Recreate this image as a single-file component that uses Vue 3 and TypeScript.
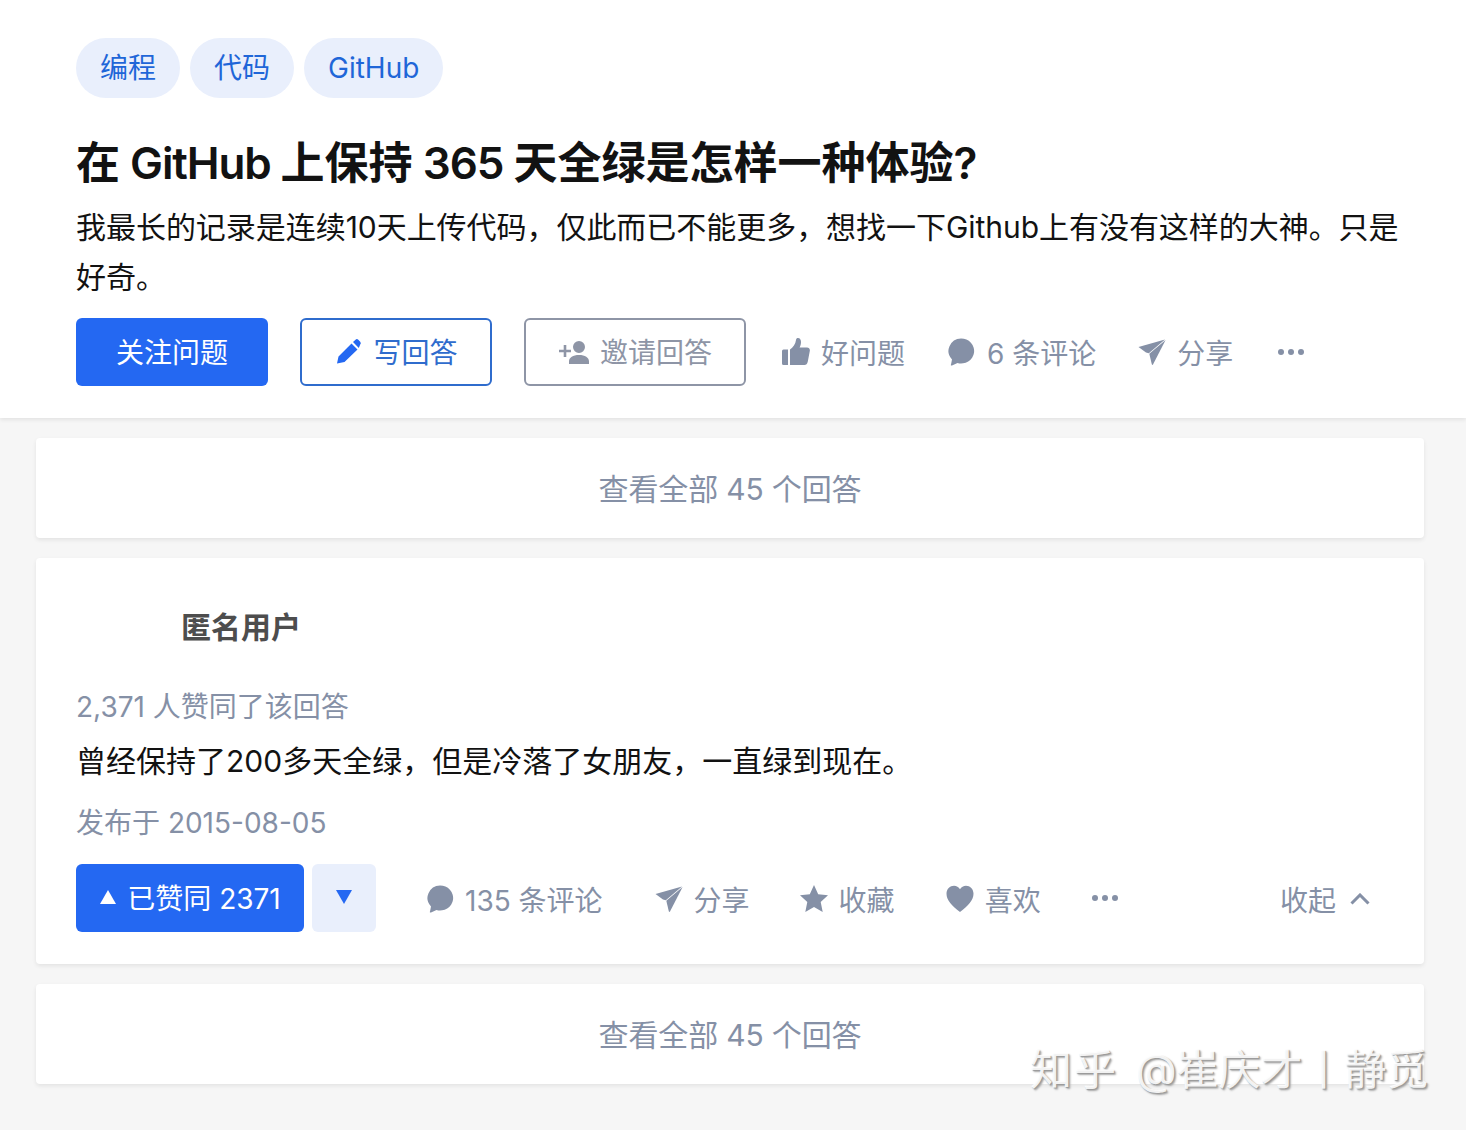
<template>
  <div class="page">
    <header class="question">
      <div class="tags">
        <span v-for="t in tags" :key="t" class="tag">{{ t }}</span>
      </div>
      <h1 class="title">在 <span class="tight-a">GitHub</span> 上保持 <span class="tight-b">365</span> 天全绿是怎样一种体验?</h1>
      <p class="desc">我最长的记录是连续10天上传代码，仅此而已不能更多，想找一下Github上有没有这样的大神。只是好奇。</p>
      <div class="actions">
        <button class="btn primary follow">关注问题</button>
        <button class="btn outline-blue">
          <svg class="pen" viewBox="0 0 28 28"><path d="M3 26.500L4.500 19.500L17.500 6.500L23.500 12.500L10.500 25zM19 5L21.500 2.800a2 2 0 0 1 2.800 0L26.200 4.700a2 2 0 0 1 0 2.800L24.800 11z" fill="currentColor" /></svg>
          写回答
        </button>
        <button class="btn outline-gray">
          <svg class="invite" viewBox="0 0 32 26"><path d="M21 3a6 6 0 1 1 0 12a6 6 0 0 1 0-12zM11 26v-2.500c0-4 4-6.500 10-6.500s10 2.500 10 6.500V26z M1 11.700h4.700V7h2.600v4.700H13v2.600H8.300V19H5.700v-4.700H1z" fill="currentColor" /></svg>
          邀请回答
        </button>
        <div class="links first">
          <span class="link l1">
            <svg class="ic thumb" viewBox="0 0 28 28"><path d="M0 13a1.500 1.500 0 0 1 1.500-1.500H6V27H1.500A1.500 1.500 0 0 1 0 25.500zM8 11.500c3-2 5.500-5.500 6-9.500c.2-1.500 1-2 2-2c2 0 3 2 3 4c0 2-.6 4-1.400 5.500h7.400c2 0 3.200 1.500 2.800 3.500l-2 10.500C25.400 26 24 27 22.500 27H8z" fill="currentColor" /></svg>
            好问题
          </span>
          <span class="link l2">
            <svg class="ic" viewBox="0 0 28 28"><use href="#bubble" /></svg>
            6 条评论
          </span>
          <span class="link l3">
            <svg class="ic" viewBox="0 0 28 28"><use href="#plane" /></svg>
            分享
          </span>
          <span class="dots d1"><i /><i /><i /></span>
        </div>
      </div>
    </header>

    <section class="card more">查看全部 45 个回答</section>

    <section class="card answer">
      <div class="author">匿名用户</div>
      <div class="meta">2,371 人赞同了该回答</div>
      <p class="content">曾经保持了200多天全绿，但是冷落了女朋友，一直绿到现在。</p>
      <div class="meta date">发布于 2015-08-05</div>
      <div class="answer-bar">
        <button class="btn primary vote">
          <svg class="tri up" viewBox="0 0 16 14"><path d="M8 0l8 14H0z" fill="currentColor" /></svg>
          已赞同 2371
        </button>
        <button class="btn down">
          <svg class="tri" viewBox="0 0 16 14"><path d="M0 0h16L8 14z" fill="currentColor" /></svg>
        </button>
        <span class="link a1">
          <svg class="ic" viewBox="0 0 28 28"><use href="#bubble" /></svg>
          135 条评论
        </span>
        <span class="link a2">
          <svg class="ic" viewBox="0 0 28 28"><use href="#plane" /></svg>
          分享
        </span>
        <span class="link a3">
          <svg class="ic" viewBox="0 0 28 28"><path d="M14 0l4.200 9.200 9.800 1.100-7.300 6.700 2 9.900L14 22l-8.700 4.900 2-9.900L0 10.300l9.800-1.100z" fill="currentColor" /></svg>
          收藏
        </span>
        <span class="link a4">
          <svg class="ic" viewBox="0 0 28 28"><path d="M14 27C6 21 .5 15.500.5 8.800C.5 4 4 .8 8 .8c2.500 0 4.700 1.200 6 3.400C15.300 2 17.500.8 20 .8c4 0 7.500 3.200 7.500 8C27.500 15.500 22 21 14 27z" fill="currentColor" /></svg>
          喜欢
        </span>
        <span class="dots a5"><i /><i /><i /></span>
        <span class="link fold">
          收起
          <svg class="chev" viewBox="0 0 20 12"><path d="M1.500 10.500L10 2l8.500 8.500" fill="none" stroke="currentColor" stroke-width="3" /></svg>
        </span>
      </div>
    </section>

    <section class="card more">查看全部 45 个回答</section>

    <div class="mark"><span class="mark-brand">知乎</span>@崔庆才丨静觅</div>

    <svg class="defs" width="0" height="0">
      <defs>
        <path id="bubble" d="M13 0.500a13 12.500 0 1 1-3.500 24.500L4 27.500c-1 .4-1.500-.3-1-1L4 21.500A13 12.500 0 0 1 13 .5z" fill="currentColor" />
        <g id="plane" fill="currentColor">
          <path d="M.5 9L27 1.500L10.800 15.200L8 14.500z" />
          <path d="M27.600 2L15 26.500c-.4.700-1 .5-1.200-.2L11.300 15.700z" />
        </g>
      </defs>
    </svg>
  </div>
</template>

<script setup lang="ts">
const tags: string[] = ['编程', '代码', 'GitHub']
</script>

<style>
html,
body {
  background: #f6f6f6;
}
</style>

<style scoped>
.page {
  position: relative;
  height: 1130px;
  overflow: hidden;
  background: #f6f6f6;
  font-family: Inter, "Noto Sans CJK SC", sans-serif;
  color: #121212;
}

.question {
  height: 418px;
  padding: 38px 60px 0 76px;
  box-sizing: border-box;
  background: #fff;
  box-shadow: 0 2px 4px rgba(18, 18, 18, 0.08);
}

.tags {
  display: flex;
  gap: 10px;
}

.tag {
  height: 60px;
  line-height: 60px;
  padding: 0 24px;
  border-radius: 30px;
  background: #e9effc;
  color: #1f66d8;
  font-size: 28px;
}

.title {
  margin: 36px 0 0;
  font-size: 44px;
  line-height: 58px;
  font-weight: 600;
  word-spacing: -1px;
}

.tight-a {
  letter-spacing: -1.15px;
}

.tight-b {
  letter-spacing: -1px;
}

.desc {
  margin: 10px 0 0;
  font-size: 30px;
  line-height: 50px;
  letter-spacing: -0.04px;
}

.actions {
  display: flex;
  align-items: center;
  margin-top: 16px;
}

.btn {
  display: flex;
  align-items: center;
  justify-content: center;
  height: 68px;
  box-sizing: border-box;
  border-radius: 6px;
  border: 2px solid transparent;
  padding: 0 0 2px;
  font-family: inherit;
  font-size: 28px;
  background: none;
}

.primary {
  background: #2468f2;
  color: #fff;
}

.follow {
  width: 192px;
}

.outline-blue {
  width: 192px;
  margin-left: 32px;
  gap: 11px;
  border-color: #2f6ccd;
  color: #2f6ccd;
}

.outline-gray {
  width: 222px;
  margin-left: 32px;
  gap: 10px;
  border-color: #8e95a6;
  color: #8e95a6;
}

.pen {
  width: 28px;
  height: 28px;
  color: #2468f2;
}

.invite {
  width: 32px;
  height: 26px;
}

.links {
  display: flex;
  align-items: center;
}

.links.first {
  margin-left: 36px;
}

.link {
  display: flex;
  align-items: center;
  gap: 11px;
  color: #8590a6;
  font-size: 28px;
  white-space: nowrap;
}

.ic {
  width: 28px;
  height: 28px;
  flex: none;
}

.l2 {
  margin-left: 43px;
}

.l3 {
  margin-left: 42px;
}

.dots {
  display: flex;
  gap: 4px;
}

.d1 {
  margin-left: 45px;
}

.dots i {
  width: 6px;
  height: 6px;
  border-radius: 50%;
  background: #8590a6;
}

.card {
  margin: 20px 42px 0 36px;
  background: #fff;
  border-radius: 4px;
  box-shadow: 0 2px 4px rgba(18, 18, 18, 0.08);
}

.more {
  height: 100px;
  padding-top: 1px;
  box-sizing: border-box;
  line-height: 100px;
  text-align: center;
  font-size: 30px;
  letter-spacing: -0.15px;
  color: #8590a6;
}

.answer {
  height: 406px;
  padding: 48px 40px 0;
  box-sizing: border-box;
}

.author {
  margin-left: 105px;
  font-size: 30px;
  line-height: 42px;
  font-weight: 700;
  color: #4d4d4d;
}

.meta {
  font-size: 28px;
  line-height: 40px;
  color: #8590a6;
}

.answer > .meta {
  margin-top: 39px;
}

.content {
  margin: 14px 0 0;
  font-size: 30px;
  line-height: 40px;
}

.answer > .meta.date {
  margin-top: 22px;
}

.answer-bar {
  display: flex;
  align-items: center;
  margin-top: 21px;
}

.answer-bar .link {
  margin-top: 2px;
}

.vote {
  width: 228px;
  gap: 10px;
}

.tri {
  width: 16px;
  height: 14px;
}

.up {
  width: 18px;
}

.down {
  width: 64px;
  margin-left: 8px;
  background: #e9effc;
  color: #2468f2;
}

.a1 {
  margin-left: 51px;
  gap: 10px;
}

.a2 {
  margin-left: 52px;
}

.a3 {
  margin-left: 50px;
}

.a4 {
  margin-left: 51px;
}

.a5 {
  margin-left: 51px;
}

.fold {
  margin-left: auto;
  margin-right: 14px;
  gap: 14px;
}

.chev {
  width: 20px;
  height: 12px;
}

.mark {
  position: absolute;
  left: 1030px;
  top: 1044px;
  font-size: 42px;
  line-height: 52px;
  white-space: nowrap;
  color: rgba(255, 255, 255, 0.9);
  text-shadow: 1px 1px 1px #999, 2px 2px 2px #aaa;
}

.mark-brand {
  letter-spacing: 2px;
  margin-right: 18px;
}

.defs {
  position: absolute;
}
</style>
